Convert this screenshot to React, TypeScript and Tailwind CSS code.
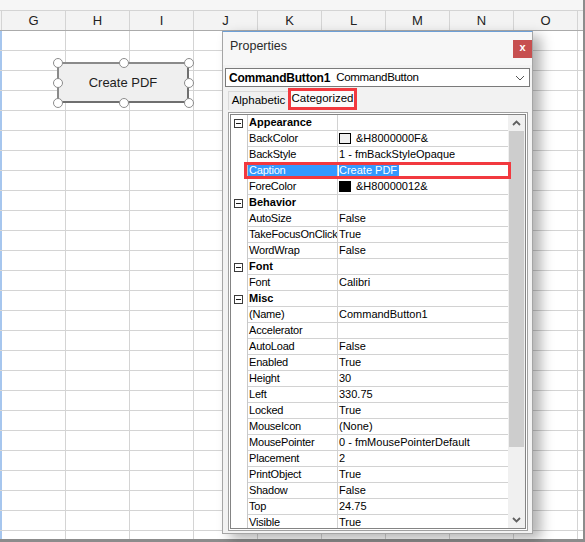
import React from "react";

type PropRow =
  | { kind: "cat"; label: string }
  | { kind: "prop"; name: string; value: string; swatch?: string; selected?: boolean };

const rows: PropRow[] = [
  { kind: "cat", label: "Appearance" },
  { kind: "prop", name: "BackColor", value: "&H8000000F&", swatch: "bg-[#f0f0f0]" },
  { kind: "prop", name: "BackStyle", value: "1 - fmBackStyleOpaque" },
  { kind: "prop", name: "Caption", value: "Create PDF", selected: true },
  { kind: "prop", name: "ForeColor", value: "&H80000012&", swatch: "bg-black" },
  { kind: "cat", label: "Behavior" },
  { kind: "prop", name: "AutoSize", value: "False" },
  { kind: "prop", name: "TakeFocusOnClick", value: "True" },
  { kind: "prop", name: "WordWrap", value: "False" },
  { kind: "cat", label: "Font" },
  { kind: "prop", name: "Font", value: "Calibri" },
  { kind: "cat", label: "Misc" },
  { kind: "prop", name: "(Name)", value: "CommandButton1" },
  { kind: "prop", name: "Accelerator", value: "" },
  { kind: "prop", name: "AutoLoad", value: "False" },
  { kind: "prop", name: "Enabled", value: "True" },
  { kind: "prop", name: "Height", value: "30" },
  { kind: "prop", name: "Left", value: "330.75" },
  { kind: "prop", name: "Locked", value: "True" },
  { kind: "prop", name: "MouseIcon", value: "(None)" },
  { kind: "prop", name: "MousePointer", value: "0 - fmMousePointerDefault" },
  { kind: "prop", name: "Placement", value: "2" },
  { kind: "prop", name: "PrintObject", value: "True" },
  { kind: "prop", name: "Shadow", value: "False" },
  { kind: "prop", name: "Top", value: "24.75" },
  { kind: "prop", name: "Visible", value: "True" },
];

const columns = ["G", "H", "I", "J", "K", "L", "M", "N", "O"];
const sheetRows = Array.from({ length: 26 }, (_, i) => i);

// selection handles around the command button: [left, top]
const handles: [number, number][] = [
  [57, 62], [123, 62], [188, 62],
  [57, 82], [188, 82],
  [57, 102], [123, 102], [188, 102],
];

function MinusBox() {
  return (
    <span className="flex h-[9px] w-[9px] items-center justify-center border border-[#3a3a3a] bg-white">
      <span className="h-px w-[5px] bg-[#1a1a1a]" />
    </span>
  );
}

function Sheet() {
  return (
    <div className="flex h-[539px] w-[583px] flex-col overflow-hidden bg-white">
      <div className="h-[11px] shrink-0 border-b border-[#d4d4d4] bg-[#f6f6f6]" />
      <div className="flex h-[20px] shrink-0 border-b border-[#ababab] bg-[#f3f3f3]">
        <div className="w-[2px] shrink-0 border-r border-[#d4d4d4]" />
        {columns.map((c) => (
          <div
            key={c}
            className="flex w-[64px] shrink-0 items-center justify-center border-r border-[#d4d4d4] text-[13px] text-[#222]">
            {c}
          </div>
        ))}
        <div className="flex-1" />
      </div>
      {sheetRows.map((r) => (
        <div key={r} className="flex h-[20px] shrink-0 border-b border-[#d4d4d4]">
          <div className="w-[2px] shrink-0 bg-[#a6c6ee]" />
          {columns.map((c) => (
            <div key={c} className="w-[64px] shrink-0 border-r border-[#d4d4d4]" />
          ))}
          <div className="flex-1" />
        </div>
      ))}
    </div>
  );
}

function CommandButton() {
  return (
    <>
      <div className="absolute left-[57px] top-[62px] flex h-[41px] w-[132px] items-center justify-center border-2 border-[#8a8a8a] border-b-[#6f6f6f] border-r-[#6f6f6f] bg-[#efefef] text-[13px] text-[#1e1e1e]">
        Create PDF
      </div>
      {handles.map(([x, y], i) => (
        <span
          key={i}
          className="absolute h-[10px] w-[10px] -translate-x-1/2 -translate-y-1/2 rounded-full border-[1.5px] border-[#8c8c8c] bg-white"
          style={{ left: x + 1, top: y + 1 }}
        />
      ))}
    </>
  );
}

function PropertyGrid() {
  return (
    <div className="ml-[5px] mt-[2px] h-[419px] w-[300px] shrink-0 border border-[#a0a0a0] bg-white p-px">
      <div className="relative flex h-full border border-[#848484] text-[11px] text-black">
        <div className="flex w-[277px] flex-col overflow-hidden">
          {rows.map((row, i) =>
            row.kind === "cat" ? (
              <div key={i} className="flex h-[16px] shrink-0">
                <div className="flex w-[17px] shrink-0 items-center border-r border-[#c9c9c9] pl-[3px]">
                  <MinusBox />
                </div>
                <div className="flex w-[90px] shrink-0 items-center border-b border-r border-[#d2d2d2] pl-px font-bold">
                  {row.label}
                </div>
                <div className="flex-1 border-b border-[#d2d2d2]" />
              </div>
            ) : (
              <div key={i} className="flex h-[16px] shrink-0">
                <div className="w-[17px] shrink-0 border-r border-[#c9c9c9]" />
                <div
                  className={`flex w-[90px] shrink-0 items-center overflow-hidden whitespace-nowrap border-b border-r border-[#d2d2d2] pl-px tracking-[-0.2px] ${
                    row.selected ? "bg-[#3399ff] text-white" : ""
                  }`}>
                  {row.name}
                </div>
                <div className="flex flex-1 items-center overflow-hidden whitespace-nowrap border-b border-[#d2d2d2] pl-px">
                  {row.swatch && (
                    <span className={`mr-[5px] h-[11px] w-[12px] shrink-0 border border-black ${row.swatch}`} />
                  )}
                  {row.selected ? (
                    <span className="flex h-[13px] items-center bg-[#3399ff] pr-[2px] text-white">{row.value}</span>
                  ) : (
                    row.value
                  )}
                </div>
              </div>
            )
          )}
        </div>
        <div className="flex w-[17px] shrink-0 flex-col bg-[#f0f0f0]">
          <div className="flex h-[16px] shrink-0 items-center justify-center">
            <svg width="9" height="6" viewBox="0 0 9 6">
              <polyline points="1,5 4.5,1.5 8,5" fill="none" stroke="#606060" strokeWidth="1.8" />
            </svg>
          </div>
          <div className="mx-px h-[316px] shrink-0 bg-[#cdcdcd]" />
          <div className="mt-auto flex h-[16px] shrink-0 items-center justify-center">
            <svg width="9" height="6" viewBox="0 0 9 6">
              <polyline points="1,1 4.5,4.5 8,1" fill="none" stroke="#606060" strokeWidth="1.8" />
            </svg>
          </div>
        </div>
        {/* annotation round the Caption row */}
        <div className="pointer-events-none absolute left-[13px] top-[47px] h-[17px] w-[267px] border-[3px] border-[#f2393f]" />
      </div>
    </div>
  );
}

function PropertiesWindow() {
  return (
    <div className="absolute left-[222px] top-[31px] flex h-[503px] w-[311px] flex-col border border-[#a5a5a5] border-t-[#6d9fd6] bg-[#f2f2f2] shadow-[8px_5px_12px_rgba(0,0,0,0.3)]">
      <div className="flex h-[33px] shrink-0 items-center bg-[#f7f7f7]">
        <span className="mb-[4px] ml-[7px] text-[12.5px] text-[#2b2b2b]">Properties</span>
        <span className="ml-auto flex h-[18px] w-[19px] items-center justify-center bg-[#c75050] pb-[2px] text-[11px] font-bold leading-none text-white">
          x
        </span>
      </div>
      <div className="mx-[2px] mt-[3px] flex h-[19px] shrink-0 items-center border border-[#7a7a7a] bg-white pl-[3px] text-[12px] text-black">
        <span className="font-bold tracking-[-0.2px]">CommandButton1</span>
        <span className="ml-[6px] text-[11.5px] tracking-[-0.3px]">CommandButton</span>
        <svg className="ml-auto mr-[4px]" width="10" height="6" viewBox="0 0 10 6">
          <polyline points="1,1 5,5 9,1" fill="none" stroke="#555" strokeWidth="1" />
        </svg>
      </div>
      <div className="flex h-[23px] shrink-0 items-start pl-[5px] text-[11.5px] text-black">
        <div className="mt-[4px] flex h-[19px] w-[60px] items-center justify-center border-l border-t border-[#d9d9d9] bg-[#f0f0f0]">
          Alphabetic
        </div>
        <div className="mt-px flex h-[22px] w-[69px] items-center justify-center border-[3px] border-[#f2393f] bg-[#fbfbfb]">
          Categorized
        </div>
      </div>
      <PropertyGrid />
    </div>
  );
}

export default function App() {
  return (
    <div
      className="relative h-[542px] w-[585px] overflow-hidden bg-[#8c8c8c]"
      style={{ fontFamily: '"Liberation Sans", Arial, sans-serif' }}>
      <Sheet />
      <CommandButton />
      <PropertiesWindow />
    </div>
  );
}
